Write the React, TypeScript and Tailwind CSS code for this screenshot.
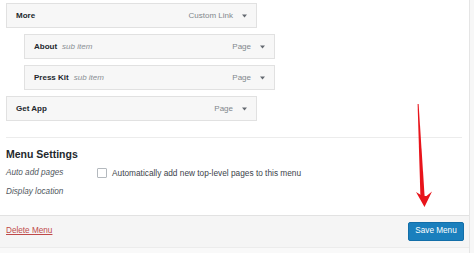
import React from "react";

function Caret() {
  return (
    <svg width="5" height="4" viewBox="0 0 5 4" className="ml-[9px]">
      <path d="M0 0.5 L5 0.5 L2.5 3.5 Z" fill="#646970" />
    </svg>
  );
}

function Item({ title, sub, type, indent }: { title: string; sub?: boolean; type: string; indent?: boolean }) {
  return (
    <div
      className={`h-[25px] w-[251px] flex items-center justify-between border border-[#e1e1e1] bg-[#f7f7f7] pl-[9px] pr-[9px] ${indent ? "ml-[18px]" : ""}`}
    >
      <div className="flex items-center gap-[5px]">
        <span className="font-bold text-[8px] text-[#23282d]">{title}</span>
        {sub && <span className="italic text-[8px] text-[#8a8f94]">sub item</span>}
      </div>
      <div className="flex items-center">
        <span className="text-[8px] text-[#82878c]">{type}</span>
        <Caret />
      </div>
    </div>
  );
}

export default function App() {
  return (
    <div
      className="relative w-[474px] h-[253px] bg-[#f7f7f7] overflow-hidden"
      style={{ fontFamily: '"Liberation Sans", Arial, sans-serif' }}
    >
      <div className="w-[470px] h-[253px] bg-white border-r border-[#e5e5e5] flex flex-col">
        <div className="h-[215px] px-[6px] pt-[3px] flex flex-col">
          <div className="flex flex-col gap-[6px]">
            <Item title="More" type="Custom Link" />
            <Item title="About" sub type="Page" indent />
            <Item title="Press Kit" sub type="Page" indent />
            <Item title="Get App" type="Page" />
          </div>
          <div className="mt-[16px] mr-[1px] border-t border-[#ececec]" />
          <div className="mt-[9px] text-[10.5px] font-bold text-[#23282d] leading-[14px]">Menu Settings</div>
          <div className="mt-[4px] flex items-center h-[16px]">
            <span className="w-[91px] italic text-[8.2px] text-[#50575e]">Auto add pages</span>
            <span className="w-[10px] h-[10px] border border-[#b4b9be] bg-white rounded-[1px]" />
            <span className="ml-[5px] text-[8.3px] text-[#3c434a]">Automatically add new top-level pages to this menu</span>
          </div>
          <div className="mt-[3px] flex items-center h-[16px]">
            <span className="italic text-[8.2px] text-[#50575e]">Display location</span>
          </div>
        </div>
        <div className="h-[32px] bg-[#f5f5f5] border-t border-[#e2e2e2] flex items-center justify-between pl-[6px] pr-[5px]">
          <span className="text-[8.2px] text-[#bf4a4a] underline">Delete Menu</span>
          <button className="h-[19px] w-[56px] rounded-[2px] bg-[#1a7fbd] border border-[#126ea8] text-white text-[8.2px] flex items-center justify-center">
            Save Menu
          </button>
        </div>
        <div className="flex-1 bg-[#f9f9f9] border-t border-[#ececec]" />
      </div>
      <svg className="absolute left-0 top-0" width="474" height="253" viewBox="0 0 474 253">
        <path d="M417.6 104 L418.6 104 L424.6 196 L420.4 196 Z" fill="#e8141b" />
        <path d="M416 192 L422.5 196 L426.5 196 L432 191.5 L424.5 207 Z" fill="#e8141b" />
      </svg>
    </div>
  );
}
